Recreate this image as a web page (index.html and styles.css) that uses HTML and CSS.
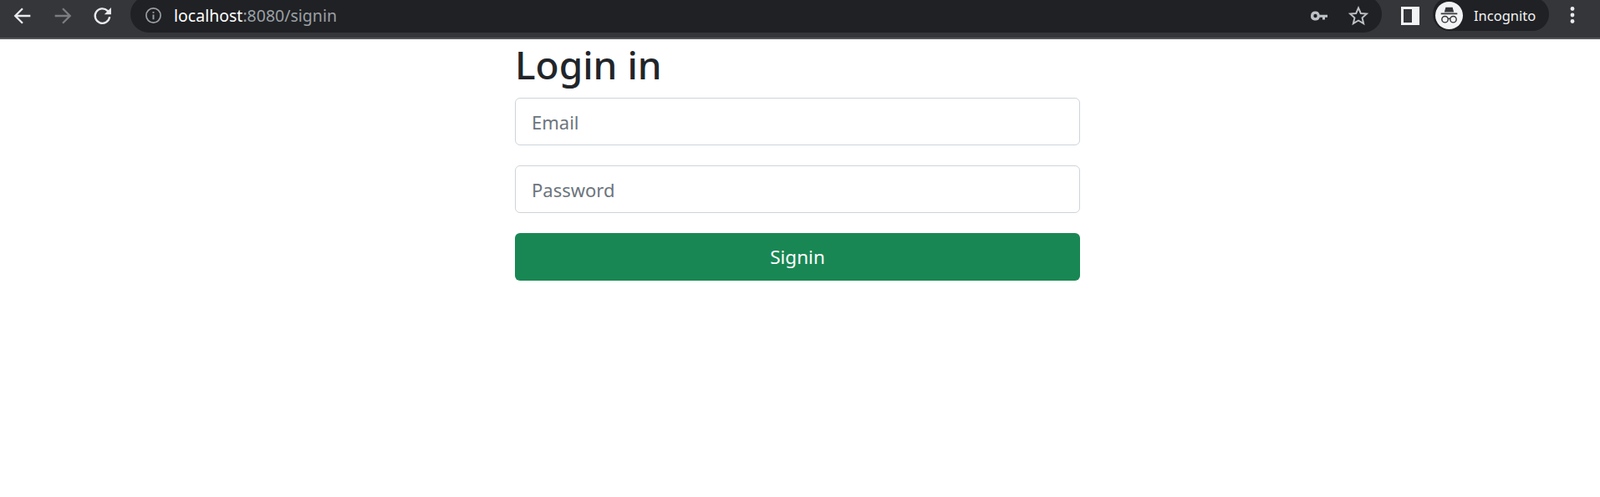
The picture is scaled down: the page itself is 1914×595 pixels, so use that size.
FILE: index.html

```html
<!DOCTYPE html>
<html lang="en">
<head>
<meta charset="UTF-8">
<title>Signin</title>
<link rel="stylesheet" href="styles.css">
</head>
<body>

<div class="toolbar">
    <div class="nav-btns">
        <svg class="nav-icon" viewBox="0 0 24 24"><path d="M20 12H5M12 4.500 4.500 12l7.500 7.500" fill="none" stroke="#e8eaed" stroke-width="2"/></svg>
        <svg class="nav-icon" viewBox="0 0 24 24"><path d="M4 12h15M12 4.500l7.500 7.500-7.500 7.500" fill="none" stroke="#7c7d80" stroke-width="2"/></svg>
        <svg class="nav-icon" viewBox="0 0 24 24"><path d="M19 13a7.500 7.500 0 1 1-2.200-6.300L19 9" fill="none" stroke="#e8eaed" stroke-width="2"/><path d="M20.500 3.500v7h-7z" fill="#e8eaed"/></svg>
    </div>
    <div class="address-bar">
        <svg class="info-icon" viewBox="0 0 20 20"><circle cx="10" cy="10" r="8.200" fill="none" stroke="#9aa0a6" stroke-width="1.600"/><path d="M9.100 9h1.800v5.500H9.100zM9.100 5.600h1.800v1.800H9.100z" fill="#9aa0a6"/></svg>
        <div class="url"><span class="host">localhost</span>:8080/signin</div>
        <svg class="key-icon" viewBox="0 0 24 24"><path d="M7.500 6.500a5.500 5.500 0 1 0 5.200 7.200H16v2.800h3v-2.800h3v-3H12.700A5.500 5.500 0 0 0 7.500 6.500zm0 3.300a2.200 2.200 0 1 1 0 4.400 2.200 2.200 0 0 1 0-4.400z" fill="#bdc1c6"/></svg>
        <svg class="star-icon" viewBox="0 0 24 24"><path d="m12 3.200 2.600 6 6.500.6-4.900 4.300 1.500 6.400-5.700-3.400-5.700 3.400 1.500-6.400-4.900-4.300 6.500-.6z" fill="none" stroke="#bdc1c6" stroke-width="1.800"/></svg>
    </div>
    <svg class="panel-icon" viewBox="0 0 22 22"><path d="M0 0h22v22H0zM3 3v16h10V3z" fill="#f1f3f4" fill-rule="evenodd"/></svg>
    <div class="profile">
        <div class="avatar">
            <svg viewBox="0 0 32 32"><path d="M12 6.500h8l1.500 5.500h-11zM6.500 13h19v1.800h-19z" fill="#35363a"/><g fill="none" stroke="#35363a" stroke-width="1.400"><circle cx="11.200" cy="20.500" r="3.600"/><circle cx="20.800" cy="20.500" r="3.600"/><path d="M14.800 20c.8-.6 1.600-.6 2.400 0"/></g></svg>
        </div>
        <span>Incognito</span>
    </div>
    <svg class="menu-icon" viewBox="0 0 6 24"><circle cx="3" cy="4.500" r="2.400" fill="#e8eaed"/><circle cx="3" cy="12" r="2.400" fill="#e8eaed"/><circle cx="3" cy="19.500" r="2.400" fill="#e8eaed"/></svg>
</div>

<div class="container">
    <h1>Login in</h1>
    <form class="signin-form">
        <input type="email" class="field" placeholder="Email">
        <input type="password" class="field" placeholder="Password">
        <button type="button" class="submit-btn">Signin</button>
    </form>
</div>

</body>
</html>
```

FILE: styles.css

```css
body { margin: 0; background: #fff; font-family: "Noto Sans", "Open Sans", sans-serif; color: #212529; }

.toolbar { height: 45px; background: #35363a; border-bottom: 2px solid #55565a; display: flex; align-items: flex-start; overflow: hidden; }
.nav-btns { display: flex; gap: 20px; padding: 5px 0 0 13px; width: 156px; box-sizing: border-box; flex: none; }
.nav-icon { width: 28px; height: 28px; flex: none; }

/* pills run off the top of the window */
.address-bar { width: 1497px; height: 44px; margin-top: -5px; padding: 3px 15px 0 17px; background: #202124; border-radius: 22px; display: flex; align-items: center; box-sizing: border-box; flex: none; }
.info-icon { width: 21px; height: 21px; flex: none; }
.url { margin-left: 14px; font-size: 19.500px; color: #9aa0a6; flex: 1; }
.url .host { color: #fff; }
.key-icon { width: 24px; height: 24px; margin-right: 22px; }
.star-icon { width: 26px; height: 26px; }

.panel-icon { width: 22px; height: 22px; margin: 8px 0 0 23px; flex: none; }
.profile { width: 139px; height: 40px; margin: -3px 0 0 16px; padding: 3px 0 0 3px; background: #202124; border-radius: 20px; display: flex; align-items: center; color: #f1f3f4; font-size: 16.500px; box-sizing: border-box; flex: none; }
.avatar { width: 33px; height: 33px; background: #f1f3f4; border-radius: 50%; margin-right: 13px; flex: none; }
.avatar svg { width: 33px; height: 33px; display: block; }
.menu-icon { width: 6px; height: 24px; margin: 6px 0 0 25px; flex: none; }

.container { width: 676px; margin-left: 616px; }
.container h1 { margin: 0; height: 70px; font-size: 46px; line-height: 61px; font-weight: 500; }

.signin-form { display: flex; flex-direction: column; gap: 24px; }
.field { height: 57px; padding: 0 19px; border: 1px solid #ced4da; border-radius: 6px; font-family: inherit; font-size: 22px; box-sizing: border-box; color: #212529; }
.field::placeholder { color: #6c757d; opacity: 1; }
.submit-btn { height: 57px; background: #198754; border: none; border-radius: 6px; color: #fff; font-family: inherit; font-size: 22.500px; cursor: pointer; }
.submit-btn:hover { background: #157347; }
```
